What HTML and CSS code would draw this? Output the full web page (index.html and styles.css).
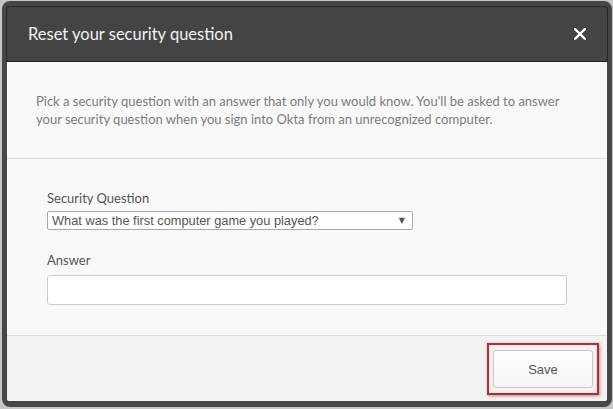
FILE: index.html
```html
<!DOCTYPE html>
<html>
<head>
<meta charset="utf-8">
<link rel="stylesheet" href="styles.css">
</head>
<body>
<div class="dialog">
  <div class="header">
    <h1 class="title">Reset your security question</h1>
    <svg class="close" width="12" height="12" viewBox="0 0 12 12"><path d="M1 1L11 11M11 1L1 11" stroke="#fff" stroke-width="2.4" stroke-linecap="square"/></svg>
  </div>
  <div class="intro">
    <p class="desc">Pick a security question with an answer that only you would know. You'll be asked to answer<br>your security question when you sign into Okta from an unrecognized computer.</p>
  </div>
  <div class="form">
    <label class="label">Security Question</label>
    <div class="select"><span class="select-text">What was the first computer game you played?</span><span class="arrow">▼</span></div>
    <label class="label label-answer">Answer</label>
    <input class="input" type="text">
  </div>
  <div class="footer">
    <div class="highlight"><button class="save">Save</button></div>
  </div>
</div>
</body>
</html>
```
FILE: styles.css
```css
html, body { margin: 0; padding: 0; }
body { background: #c6c6c6; width: 613px; height: 409px; overflow: hidden; }
.dialog {
  margin: 1px 0 0 2px;
  width: 600px;
  height: 395px;
  border: 5px solid #474747;
  border-bottom-width: 6px;
  border-radius: 8px;
  background: #f9f9f9;
  display: flex;
  flex-direction: column;
}
.header {
  height: 54px;
  flex: none;
  background: #444444;
  border-top: 1px solid #262626;
  border-bottom: 1px solid #262626;
  box-shadow: -1px 0 0 #262626, 1px 0 0 #262626;
  display: flex;
  align-items: center;
  justify-content: space-between;
  padding: 0 21px;
  border-radius: 3px 3px 0 0;
}
.title {
  margin: 0;
  font-family: Lato, "Open Sans", sans-serif;
  font-weight: 400;
  font-size: 16.5px;
  color: #f2f2f2;
}
.close { display: block; margin-top: -1px; }
.intro {
  height: 97px;
  flex: none;
  border-bottom: 1px solid #dddddd;
  padding: 30px 0 0 29px;
  box-sizing: border-box;
}
.desc {
  margin: 0;
  font-family: Lato, "Open Sans", sans-serif;
  font-size: 13px;
  line-height: 18px;
  color: #7c7c7c;
}
.form {
  height: 177px;
  flex: none;
  border-bottom: 1px solid #dddddd;
  padding: 31px 0 0 40px;
  box-sizing: border-box;
  display: flex;
  flex-direction: column;
  align-items: flex-start;
}
.label {
  font-family: Lato, "Open Sans", sans-serif;
  font-size: 13px;
  line-height: 16px;
  color: #555555;
  margin-bottom: 5px;
}
.label-answer { margin-top: 22px; margin-bottom: 7px; }
.select {
  width: 366px;
  height: 19px;
  box-sizing: border-box;
  border: 1px solid #a9a9a9;
  border-radius: 2px;
  background: #ffffff;
  display: flex;
  align-items: center;
  justify-content: space-between;
  padding: 0 7px 0 4px;
}
.select-text {
  font-family: "Liberation Sans", Arial, sans-serif;
  font-size: 12.8px;
  color: #555555;
}
.arrow {
  font-family: "DejaVu Sans", sans-serif;
  font-size: 8px;
  color: #555555;
}
.input {
  width: 520px;
  height: 30px;
  box-sizing: border-box;
  border: 1px solid #cccccc;
  border-radius: 3px;
  background: #ffffff;
  margin: 0;
  padding: 0 8px;
}
.footer {
  flex: 1;
  background: #f2f2f2;
  display: flex;
  justify-content: flex-end;
  align-items: flex-start;
  padding: 7px 8px 0 0;
  border-radius: 0 0 3px 3px;
}
.highlight {
  border: 2px solid #c8242b;
  padding: 5px 4px;
  box-shadow: 1px 1px 3px rgba(0,0,0,0.35), inset 0 0 1px rgba(200,36,43,0.5);
  display: flex;
}
.save {
  width: 100px;
  height: 38px;
  box-sizing: border-box;
  border: 1px solid #c8c8c8;
  border-radius: 3px;
  background: linear-gradient(#ffffff, #f5f5f5);
  font-family: "Liberation Sans", Arial, sans-serif;
  font-size: 13px;
  color: #555555;
  padding: 0;
}
```
